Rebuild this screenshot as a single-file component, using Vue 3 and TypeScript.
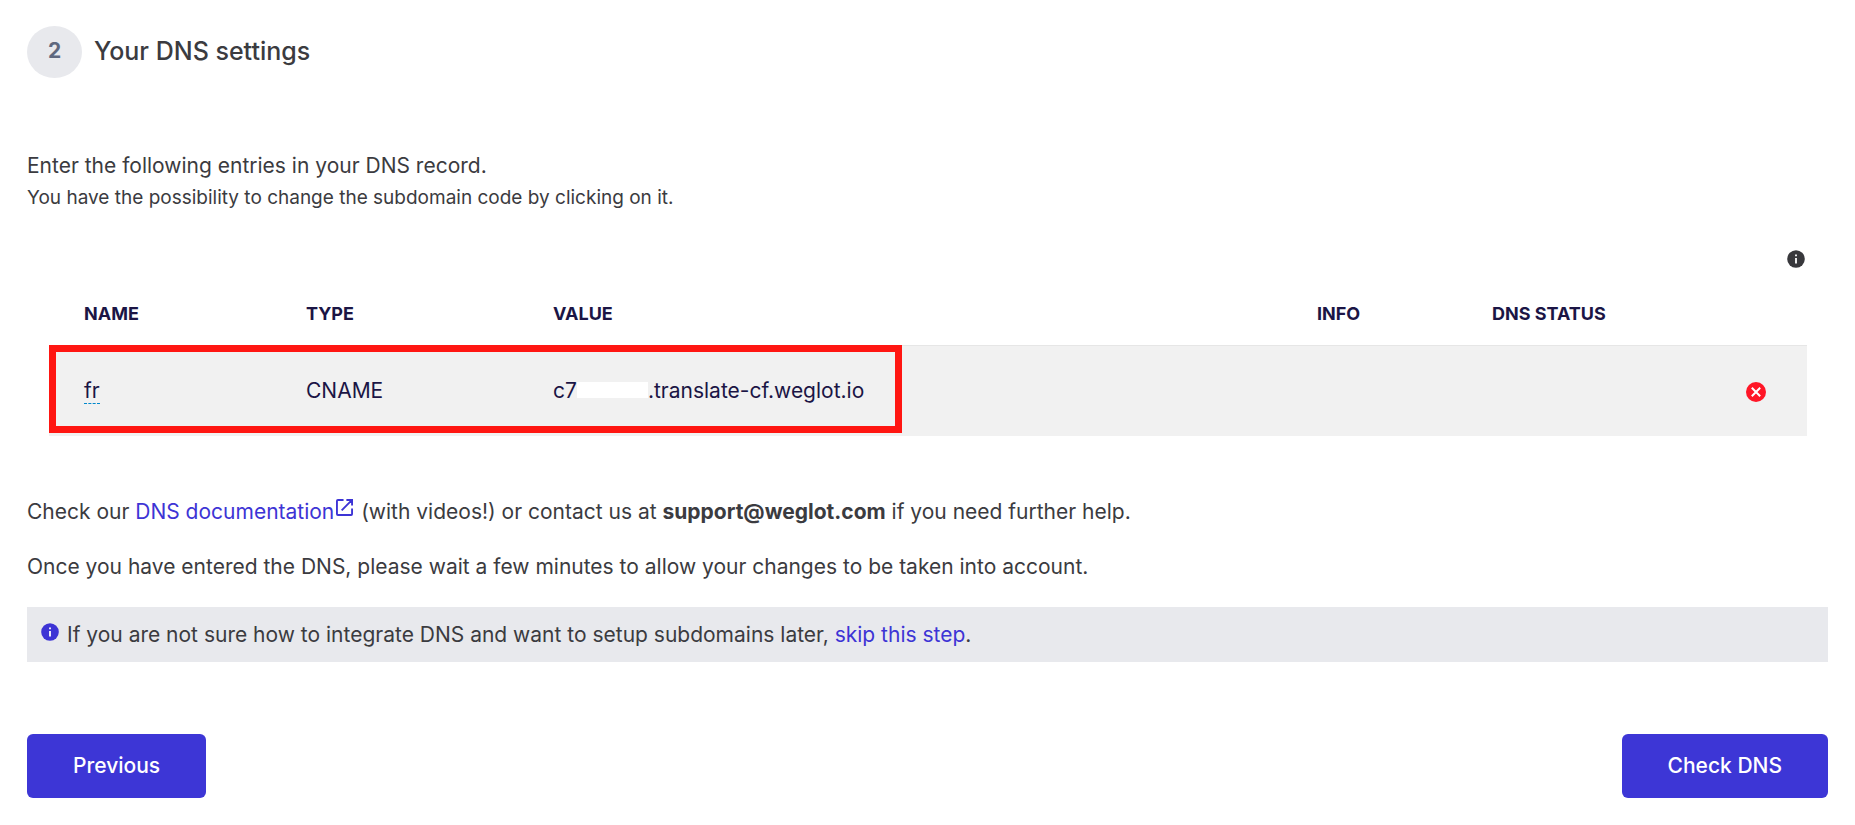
<script setup lang="ts">
interface DnsRecord { name: string; type: string; start: string; end: string }
const records: DnsRecord[] = [{ name: 'fr', type: 'CNAME', start: 'c7', end: '.translate-cf.weglot.io' }]
</script>

<template>
  <main class="page">
    <header class="heading">
      <span class="step">2</span>
      <h1>Your DNS settings</h1>
    </header>
    <section class="intro">
      <p>Enter the following entries in your DNS record.</p>
      <p class="small">You have the possibility to change the subdomain code by clicking on it.</p>
    </section>
    <section class="records">
      <div class="table-info">
        <svg width="18" height="18" viewBox="0 0 18 18" role="img" aria-label="Information"><circle cx="9" cy="9" r="8.8" fill="#38383c" /><path d="M8.1 4.5h1.8v1.8H8.1zM8.1 8h1.8v5.5H8.1z" fill="#fff" /></svg>
      </div>
      <table>
        <colgroup><col class="c-name" /><col class="c-type" /><col class="c-value" /><col class="c-info" /><col class="c-status" /></colgroup>
        <thead><tr><th>NAME</th><th>TYPE</th><th>VALUE</th><th>INFO</th><th>DNS STATUS</th></tr></thead>
        <tbody>
          <tr v-for="r in records" :key="r.name">
            <td><button class="code">{{ r.name }}</button></td>
            <td>{{ r.type }}</td>
            <td>{{ r.start }}<span class="mask"></span>{{ r.end }}</td>
            <td></td>
            <td class="status"><svg width="20" height="20" viewBox="0 0 20 20" role="img" aria-label="Not configured"><circle cx="10" cy="10" r="10" fill="#ff1627" /><path d="M5.8 5.8l8.4 8.4M14.2 5.8l-8.4 8.4" stroke="#fff" stroke-width="2" /></svg></td>
          </tr>
        </tbody>
      </table>
      <div class="highlight"></div>
    </section>
    <p class="help">Check our <a href="#documentation">DNS documentation<svg class="external" width="17" height="17" viewBox="0 0 18 18" aria-hidden="true"><path d="M8 1H2a1 1 0 0 0-1 1v14a1 1 0 0 0 1 1h14a1 1 0 0 0 1-1v-6M11 1h6v6M17 1L6 12" fill="none" stroke="currentColor" stroke-width="2" /></svg></a> (with videos!) or contact us at <strong>support@weglot.com</strong> if you need further help.</p>
    <p class="wait">Once you have entered the DNS, please wait a few minutes to allow your changes to be taken into account.</p>
    <p class="notice"><svg width="18" height="18" viewBox="0 0 18 18" aria-hidden="true"><circle cx="9" cy="9" r="8.8" fill="#3d34d5" /><path d="M8.1 4.5h1.8v1.8H8.1zM8.1 8h1.8v5.5H8.1z" fill="#fff" /></svg><span>If you are not sure how to integrate DNS and want to setup subdomains later, <a href="#skip">skip this step</a>.</span></p>
    <footer><button class="action">Previous</button><button class="action">Check DNS</button></footer>
  </main>
</template>

<style>
body { margin: 0; background: #fff; }
</style>
<style scoped>
* { box-sizing: border-box; }
.page { padding: 26px 27px; font-family: Inter, sans-serif; font-size: 21px; line-height: 32px; color: #3b3b40; }
p, h1 { margin: 0; }
a { color: #3d34d5; text-decoration: none; }
button { font: inherit; border: 0; cursor: pointer; }
.heading { display: flex; align-items: center; gap: 12px; height: 52px; }
.step { display: grid; place-items: center; width: 55px; height: 52px; padding-bottom: 3px; border-radius: 50%; background: #e8e9ed; color: #5f687f; font-size: 21px; font-weight: 700; }
h1 { padding-bottom: 3px; font-size: 25px; font-weight: 500; }
.intro { margin-top: 72px; }
.small { font-size: 19px; }
.records { position: relative; margin: 36px 21px 0 22px; }
.table-info { display: flex; justify-content: flex-end; height: 36px; padding-right: 2px; }
table { width: 100%; table-layout: fixed; border-collapse: collapse; color: #1b1545; }
th { padding: 0 0 4px 35px; height: 59px; text-align: left; font-size: 18px; font-weight: 700; }
td { padding: 0 0 0 35px; height: 91px; background: #f1f1f1; box-shadow: inset 0 1px #e6e6e6; }
.c-name { width: 222px; }
.c-type { width: 247px; }
.c-info { width: 175px; }
.c-status { width: 350px; }
.code { padding: 0; background: none; color: inherit; line-height: 24px; border-bottom: 1px dashed #0088cc; }
.mask { display: inline-block; width: 71px; height: 16px; background: #fff; vertical-align: baseline; }
td.status { text-align: right; padding-right: 41px; }
.status svg { display: inline-block; vertical-align: middle; }
.highlight { position: absolute; left: 0; top: 95px; width: 853px; height: 88px; border: 7px solid #ff1612; pointer-events: none; }
.external { margin: 0 2px; vertical-align: 3px; }
.help { margin-top: 60px; }
.wait { margin-top: 23px; }
.notice { display: flex; gap: 8px; margin-top: 24px; padding: 12px 14px 11px; background: #e8e9ed; }
.notice svg { flex: none; margin-top: 4px; }
footer { display: flex; justify-content: space-between; margin-top: 72px; }
.action { height: 64px; padding: 0 46px; border-radius: 6px; background: #3d36d6; color: #fff; font-weight: 500; }
</style>
